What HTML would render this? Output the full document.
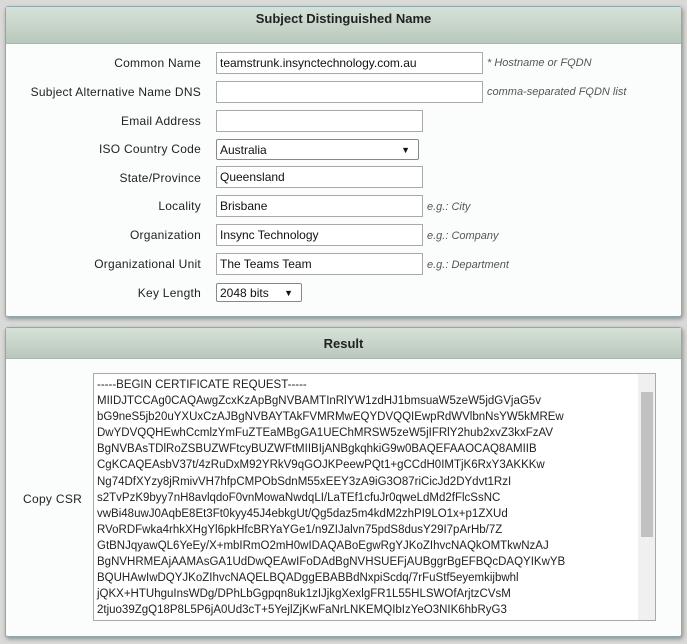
<!DOCTYPE html>
<html><head><style>
body{margin:0;width:687px;height:644px;background:#d9dad8;font-family:"Liberation Sans",sans-serif;position:relative;overflow:hidden}
.panel{position:absolute;left:5px;width:675px;background:#fbfdfc;border:1px solid #8fa8b0;border-radius:3px;box-shadow:1px 2px 4px rgba(0,0,0,.35)}
.hd{height:36px;background:linear-gradient(#d6e2d8,#b9c8bc);border-bottom:1px solid #a9b7ac;text-align:center;font-weight:bold;font-size:13px;line-height:24px;color:#222}
.lbl{position:absolute;right:480px;font-size:12px;letter-spacing:.25px;color:#222;white-space:nowrap}
.in{position:absolute;left:210px;border:1px solid #a9a9a9;background:#fff;font-size:12px;height:22px;line-height:21px;padding-left:3px;box-sizing:border-box;color:#111}
.hint{position:absolute;font-size:11px;font-style:italic;color:#555;white-space:nowrap}
.sel{border-radius:2px;border-color:#888}
.sel:after{content:"▼";position:absolute;right:8px;top:0;font-size:9px;font-style:normal}
.ta{position:absolute;left:87px;top:45px;width:563px;height:248px;border:1px solid #a9a9a9;background:#fff;box-sizing:border-box;overflow:hidden}
.ta pre{margin:0;padding:3px 0 0 3px;font-family:"Liberation Sans",sans-serif;font-size:11.5px;line-height:16.1px;color:#222}
.sb{position:absolute;right:0;top:0;width:17px;height:100%;background:#f0f0f0}
</style></head><body>
<div class="panel" style="top:6px;height:309px">
<div class="hd" style="height:36px;line-height:24px">Subject Distinguished Name</div>
<div class="lbl" style="top:49px">Common Name</div>
<div class="in" style="top:45px;width:267px">teamstrunk.insynctechnology.com.au</div>
<div class="hint" style="left:481px;top:50px">* Hostname or FQDN</div>
<div class="lbl" style="top:78px">Subject Alternative Name DNS</div>
<div class="in" style="top:74px;width:267px"></div>
<div class="hint" style="left:481px;top:79px">comma-separated FQDN list</div>
<div class="lbl" style="top:107px">Email Address</div>
<div class="in" style="top:103px;width:207px"></div>
<div class="lbl" style="top:135px">ISO Country Code</div>
<div class="in sel" style="top:132px;width:203px;height:21px;line-height:20px">Australia</div>
<div class="lbl" style="top:164px">State/Province</div>
<div class="in" style="top:159px;width:207px">Queensland</div>
<div class="lbl" style="top:192px">Locality</div>
<div class="in" style="top:188px;width:207px">Brisbane</div>
<div class="hint" style="left:421px;top:194px">e.g.: City</div>
<div class="lbl" style="top:221px">Organization</div>
<div class="in" style="top:217px;width:207px">Insync Technology</div>
<div class="hint" style="left:421px;top:223px">e.g.: Company</div>
<div class="lbl" style="top:250px">Organizational Unit</div>
<div class="in" style="top:246px;width:207px">The Teams Team</div>
<div class="hint" style="left:421px;top:252px">e.g.: Department</div>
<div class="lbl" style="top:279px">Key Length</div>
<div class="in sel" style="top:276px;width:86px;height:19px;line-height:18px">2048 bits</div>
</div>
<div class="panel" style="top:327px;height:308px">
<div class="hd" style="height:30px;line-height:32px">Result</div>
<div style="position:absolute;left:17px;top:164px;font-size:12px;letter-spacing:.3px;color:#222">Copy CSR</div>
<div class="ta"><pre>-----BEGIN CERTIFICATE REQUEST-----
MIIDJTCCAg0CAQAwgZcxKzApBgNVBAMTInRlYW1zdHJ1bmsuaW5zeW5jdGVjaG5v
bG9neS5jb20uYXUxCzAJBgNVBAYTAkFVMRMwEQYDVQQIEwpRdWVlbnNsYW5kMREw
DwYDVQQHEwhCcmlzYmFuZTEaMBgGA1UEChMRSW5zeW5jIFRlY2hub2xvZ3kxFzAV
BgNVBAsTDlRoZSBUZWFtcyBUZWFtMIIBIjANBgkqhkiG9w0BAQEFAAOCAQ8AMIIB
CgKCAQEAsbV37t/4zRuDxM92YRkV9qGOJKPeewPQt1+gCCdH0IMTjK6RxY3AKKKw
Ng74DfXYzy8jRmivVH7hfpCMPObSdnM55xEEY3zA9iG3O87riCicJd2DYdvt1RzI
s2TvPzK9byy7nH8avlqdoF0vnMowaNwdqLI/LaTEf1cfuJr0qweLdMd2fFlcSsNC
vwBi48uwJ0AqbE8Et3Ft0kyy45J4ebkgUt/Qg5daz5m4kdM2zhPI9LO1x+p1ZXUd
RVoRDFwka4rhkXHgYl6pkHfcBRYaYGe1/n9ZIJalvn75pdS8dusY29I7pArHb/7Z
GtBNJqyawQL6YeEy/X+mbIRmO2mH0wIDAQABoEgwRgYJKoZIhvcNAQkOMTkwNzAJ
BgNVHRMEAjAAMAsGA1UdDwQEAwIFoDAdBgNVHSUEFjAUBggrBgEFBQcDAQYIKwYB
BQUHAwIwDQYJKoZIhvcNAQELBQADggEBABBdNxpiScdq/7rFuStf5eyemkijbwhl
jQKX+HTUhguInsWDg/DPhLbGgpqn8uk1zIJjkgXexlgFR1L55HLSWOfArjtzCVsM
2tjuo39ZgQ18P8L5P6jA0Ud3cT+5YejlZjKwFaNrLNKEMQIbIzYeO3NIK6hbRyG3</pre>
<div class="sb"><div style="position:absolute;left:3px;top:18px;width:12px;height:145px;background:#c1c1c1"></div></div>
</div>
</div>
</body></html>
